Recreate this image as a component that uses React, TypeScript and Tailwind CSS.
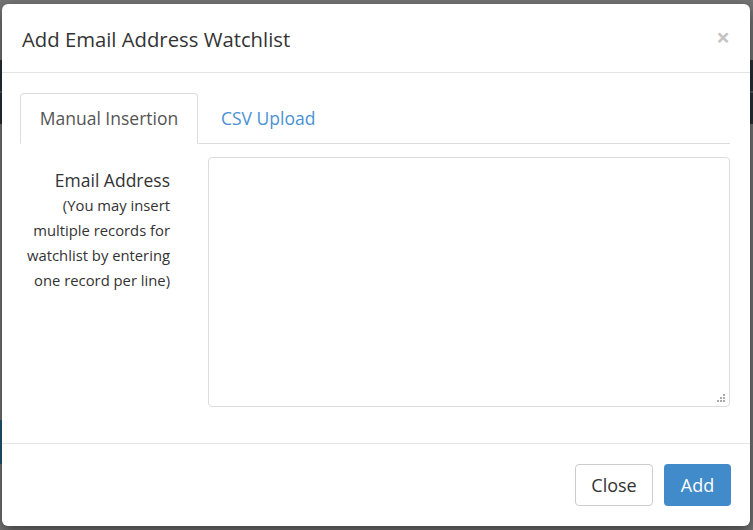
import React from 'react';

export default function App() {
  return (
    <div
      className="relative w-[753px] h-[530px] overflow-hidden bg-[#767676]"
      style={{ fontFamily: '"Open Sans", "Noto Sans", sans-serif' }}
    >
      {/* page behind the backdrop */}
      <div className="absolute left-0 right-0 top-[60px] h-[64px] bg-[#2b2f35]" />
      <div className="absolute left-0 right-0 top-[91px] h-[2px] bg-[#555a60]" />
      <div className="absolute left-0 w-[10px] top-[420px] h-[44px] bg-[#245a7c]" />

      <div className="absolute left-[2px] top-[4px] w-[748px] h-[522px] bg-white rounded-[6px] shadow-[0_5px_15px_rgba(0,0,0,0.5)] flex flex-col">
        <div className="h-[69px] flex items-center justify-between pl-[20px] pr-[20px] border-b border-[#e5e5e5]">
          <h4 className="text-[20.3px] text-[#333] font-normal leading-none pt-[2px]">Add Email Address Watchlist</h4>
          <span className="text-[24px] font-bold leading-none text-[#c4c4c4] pb-[2px]">×</span>
        </div>

        <div className="flex-1 px-[18px] pt-[21px]">
          <div className="flex items-end border-b border-[#ddd] h-[50px] mr-[2px]">
            <div className="h-[51px] -mb-px w-[178px] flex items-center justify-center border border-[#ddd] border-b-white rounded-t-[4px] bg-white text-[17.5px] text-[#555]">
              Manual Insertion
            </div>
            <div className="h-[50px] flex items-center px-[23px] text-[17.5px] text-[#4a92d4]">CSV Upload</div>
          </div>

          <div className="flex mt-[13px]">
            <div className="w-[150px] text-right pt-[11px]">
              <div className="text-[17.5px] text-[#333] leading-[24px]">Email Address</div>
              <div className="text-[14.8px] text-[#333] leading-[25px] pt-[1px]">
                (You may insert multiple records for watchlist by entering one record per line)
              </div>
            </div>
            <div className="ml-[38px] w-[522px] h-[250px] border border-[#ddd] rounded-[4px] relative">
              <svg className="absolute right-[3px] bottom-[3px]" width="9" height="9" viewBox="0 0 9 9">
                <rect x="6" y="0" width="2" height="2" fill="#aaa" />
                <rect x="3" y="3" width="2" height="2" fill="#aaa" />
                <rect x="6" y="3" width="2" height="2" fill="#aaa" />
                <rect x="0" y="6" width="2" height="2" fill="#aaa" />
                <rect x="3" y="6" width="2" height="2" fill="#aaa" />
                <rect x="6" y="6" width="2" height="2" fill="#aaa" />
              </svg>
            </div>
          </div>
        </div>

        <div className="h-[83px] border-t border-[#e5e5e5] flex items-center justify-end gap-[11px] pr-[19px]">
          <button className="h-[42px] w-[78px] border border-[#ccc] rounded-[4px] bg-white text-[18px] text-[#333]">Close</button>
          <button className="h-[42px] w-[67px] rounded-[4px] bg-[#428bca] text-[18px] text-white">Add</button>
        </div>
      </div>
    </div>
  );
}
